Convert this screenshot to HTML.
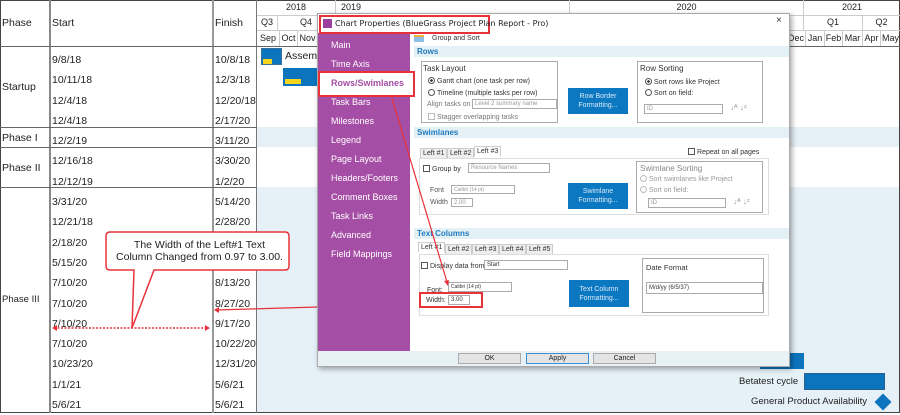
<!DOCTYPE html>
<html><head><meta charset="utf-8"><style>
*{margin:0;padding:0;box-sizing:border-box}
body{width:900px;height:413px;overflow:hidden;background:#fff;font-family:"Liberation Sans",sans-serif;position:relative;color:#222}
.a{position:absolute}
.t{position:absolute;font-size:10.5px;white-space:nowrap}
.vl{position:absolute;width:2px;background:#999}
.hl{position:absolute;height:1px;background:#666}
.g{position:absolute;font-size:9px;white-space:nowrap;border-left:1px solid #ccc;text-align:center;line-height:15px}
.d{font-family:"Liberation Sans",sans-serif;font-size:7px;color:#333;position:absolute;white-space:nowrap}
.nav{position:absolute;left:331px;font-family:"Liberation Sans",sans-serif;font-size:9px;color:#fff}
.sec{position:absolute;left:414px;width:375px;height:11px;background:#e3f0f5;font-family:"Liberation Sans",sans-serif;font-size:8px;font-weight:bold;color:#1f7ac0;padding-left:3px;line-height:11px}
.box{position:absolute;border:1px solid #aaa;background:#fff}
.btn{position:absolute;background:#0c78c2;color:#dbe9f5;font-family:"Liberation Sans",sans-serif;font-size:7px;text-align:center;line-height:9px}
.sel{position:absolute;border:1px solid #aaa;background:#fff;font-size:6px;color:#999;font-family:"Liberation Sans",sans-serif;padding-left:2px;line-height:9px}
.tab{position:absolute;font-family:"Liberation Sans",sans-serif;font-size:7px;border:1px solid #ccc;background:#eee;padding:1px 2px;color:#333}
.rad{display:inline-block;width:7px;height:7px;border:1px solid #555;border-radius:50%;vertical-align:-1px;margin-right:2px}
.chk{display:inline-block;width:7px;height:7px;border:1px solid #555;vertical-align:-1px;margin-right:2px}
</style></head><body>
<div class="a" style="left:257px;top:127px;width:643px;height:20px;background:#e5f0f7"></div>
<div class="a" style="left:257px;top:187px;width:643px;height:226px;background:#e5f0f7"></div>
<div class="a" style="left:0;top:0;width:900px;height:413px;border:1px solid #444"></div>
<div class="vl" style="left:49px;top:0;height:413px;background:#888"></div>
<div class="vl" style="left:212px;top:0;height:413px;background:#999"></div>
<div class="vl" style="left:256px;top:0;height:413px;background:#777;width:1px"></div>
<div class="hl" style="left:0;top:46px;width:900px"></div>
<div class="hl" style="left:0;top:127px;width:257px"></div>
<div class="hl" style="left:0;top:147px;width:257px"></div>
<div class="hl" style="left:0;top:187px;width:257px"></div>
<div class="t" style="left:2px;top:17px">Phase</div>
<div class="t" style="left:52px;top:17px">Start</div>
<div class="t" style="left:215px;top:17px">Finish</div>
<div class="hl" style="left:257px;top:15px;width:643px;background:#ccc"></div>
<div class="hl" style="left:257px;top:30px;width:643px;background:#ccc"></div>
<div class="g" style="left:257px;top:0;width:78px;border-left:none">2018</div>
<div class="g" style="left:335px;top:0;width:234px;text-align:left;padding-left:5px">2019</div>
<div class="g" style="left:569px;top:0;width:234px">2020</div>
<div class="g" style="left:803px;top:0;width:97px">2021</div>
<div class="g" style="left:257px;top:15px;width:20px;border-left:none">Q3</div>
<div class="g" style="left:277px;top:15px;width:40px;text-align:right;padding-right:5px">Q4</div>
<div class="g" style="left:803px;top:15px;width:59px">Q1</div>
<div class="g" style="left:862px;top:15px;width:38px">Q2</div>
<div class="g" style="left:257px;top:31px;width:22px;border-left:none">Sep</div>
<div class="g" style="left:279px;top:31px;width:18px">Oct</div>
<div class="g" style="left:297px;top:31px;width:20px">Nov</div>
<div class="g" style="left:786px;top:31px;width:19px">Dec</div>
<div class="g" style="left:805px;top:31px;width:19px">Jan</div>
<div class="g" style="left:824px;top:31px;width:18px">Feb</div>
<div class="g" style="left:842px;top:31px;width:20px">Mar</div>
<div class="g" style="left:862px;top:31px;width:18px">Apr</div>
<div class="g" style="left:880px;top:31px;width:20px">May</div>
<div class="t" style="left:2px;top:81px">Startup</div>
<div class="t" style="left:2px;top:132px">Phase I</div>
<div class="t" style="left:2px;top:162px">Phase II</div>
<div class="t" style="left:2px;top:294px;font-size:9.5px">Phase III</div>
<div class="a" style="left:52px;top:50px;line-height:20.3px;font-size:10.5px">9/8/18<br>10/11/18<br>12/4/18<br>12/4/18<br>12/2/19<br>12/16/18<br>12/12/19<br>3/31/20<br>12/21/18<br>2/18/20<br>5/15/20<br>7/10/20<br>7/10/20<br>7/10/20<br>7/10/20<br>10/23/20<br>1/1/21<br>5/6/21</div>
<div class="a" style="left:215px;top:50px;line-height:20.3px;font-size:10.5px">10/8/18<br>12/3/18<br>12/20/18<br>2/17/20<br>3/11/20<br>3/30/20<br>1/2/20<br>5/14/20<br>2/28/20<br><br><br>8/13/20<br>8/27/20<br>9/17/20<br>10/22/20<br>12/31/20<br>5/6/21<br>5/6/21</div>
<div class="a" style="left:261px;top:48px;width:21px;height:17px;background:#0b74bd;border:1px solid #3a6fa0"></div>
<div class="a" style="left:263px;top:59px;width:9px;height:5px;background:#f5d41e"></div>
<div class="t" style="left:285px;top:50px">Assemb</div>
<div class="a" style="left:283px;top:68px;width:35px;height:18px;background:#0b74bd"></div>
<div class="a" style="left:285px;top:79px;width:16px;height:5px;background:#f5d41e"></div>
<div class="a" style="left:760px;top:353px;width:44px;height:16px;background:#0b74bd"></div>
<div class="a" style="left:804px;top:373px;width:81px;height:17px;background:#0b74bd;border:1px solid #2a5f90"></div>
<div class="t" style="left:739px;top:376px;font-size:9.5px">Betatest cycle</div>
<div class="t" style="left:751px;top:396px;font-size:9.5px">General Product Availability</div>
<div class="a" style="left:877px;top:396px;width:12px;height:12px;background:#0b74bd;transform:rotate(45deg)"></div>
<svg class="a" style="left:0;top:0" width="900" height="413">
<path d="M110,232 h175 q4,0 4,4 v30 q0,4 -4,4 h-131 l-22,58 l2,-58 h-24 q-4,0 -4,-4 v-30 q0,-4 4,-4z" fill="#fff" stroke="#e8323a" stroke-width="1.5"/>
<line x1="54" y1="328" x2="208" y2="328" stroke="#e8323a" stroke-width="1.5" stroke-dasharray="2,1.5"/>
<path d="M52,328 l5,-3 v6z M210,328 l-5,-3 v6z" fill="#e8323a"/>
<line x1="216" y1="310" x2="420" y2="304" stroke="#e8323a" stroke-width="1.2"/>
<path d="M214,310 l5,-3 v6z" fill="#e8323a"/>
</svg>
<div class="t" style="left:110px;top:239px;width:179px;text-align:center;font-family:'Liberation Sans',sans-serif;font-size:10.5px;line-height:12px">The Width of the Left#1 Text<br>Column Changed from 0.97 to 3.00.</div>
<div class="a" style="left:317px;top:13px;width:473px;height:354px;background:#fff;border:1px solid #aaa;box-shadow:2px 2px 5px rgba(0,0,0,.35)"></div>
<div class="a" style="left:318px;top:33px;width:92px;height:318px;background:#a54ea5"></div>
<div class="a" style="left:318px;top:351px;width:471px;height:15px;background:#e8f1f6"></div>
<div class="a" style="left:319px;top:15px;width:171px;height:19px;border:2px solid #e8323a"></div>
<div class="a" style="left:323px;top:19px;width:9px;height:9px;background:#9b3fa0"></div>
<div class="d" style="left:335px;top:19px;font-size:8px;color:#222;font-family:'DejaVu Sans',sans-serif">Chart Properties (BlueGrass Project Plan Report - Pro)</div>
<div class="d" style="left:776px;top:15px;font-size:10px;color:#333">×</div>
<div class="nav" style="top:40px">Main</div>
<div class="nav" style="top:59px">Time Axis</div>
<div class="a" style="left:318px;top:71px;width:97px;height:26px;background:#fff;border:2px solid #e8323a"></div>
<div class="nav" style="top:78px;color:#a54ea5;font-weight:bold">Rows/Swimlanes</div>
<div class="nav" style="top:97px">Task Bars</div>
<div class="nav" style="top:116px">Milestones</div>
<div class="nav" style="top:135px">Legend</div>
<div class="nav" style="top:154px">Page Layout</div>
<div class="nav" style="top:173px">Headers/Footers</div>
<div class="nav" style="top:192px">Comment Boxes</div>
<div class="nav" style="top:211px">Task Links</div>
<div class="nav" style="top:230px">Advanced</div>
<div class="nav" style="top:249px">Field Mappings</div>
<div class="a" style="left:414px;top:35px;width:10px;height:7px;background:#8fbfe6;border-top:2px solid #f2b53a"></div>
<div class="d" style="left:432px;top:35px">Group and Sort</div>
<div class="sec" style="top:46px">Rows</div>
<div class="box" style="left:421px;top:61px;width:137px;height:62px"></div>
<div class="d" style="left:423px;top:64px;font-size:8px">Task Layout</div>
<div class="d" style="left:428px;top:77px"><span class="rad" style="background:radial-gradient(#333 35%,#fff 40%)"></span>Gantt chart (one task per row)</div>
<div class="d" style="left:428px;top:89px"><span class="rad"></span>Timeline (multiple tasks per row)</div>
<div class="d" style="left:427px;top:101px;color:#777">Align tasks on</div>
<div class="sel" style="left:472px;top:99px;width:85px;height:10px">Level 2 summary name</div>
<div class="d" style="left:428px;top:113px;color:#777"><span class="chk" style="border-color:#bbb"></span>Stagger overlapping tasks</div>
<div class="btn" style="left:568px;top:88px;width:60px;height:26px;padding-top:4px">Row Border<br>Formatting...</div>
<div class="box" style="left:637px;top:61px;width:126px;height:62px"></div>
<div class="d" style="left:640px;top:64px;font-size:8px">Row Sorting</div>
<div class="d" style="left:645px;top:78px"><span class="rad" style="background:radial-gradient(#333 35%,#fff 40%)"></span>Sort rows like Project</div>
<div class="d" style="left:645px;top:89px"><span class="rad"></span>Sort on field:</div>
<div class="sel" style="left:644px;top:104px;width:79px;height:10px">ID</div>
<div class="d" style="left:730px;top:103px;color:#999;font-size:8px">↓ᴬ ↓ᶻ</div>
<div class="sec" style="top:127px">Swimlanes</div>
<div class="tab" style="left:420px;top:148px">Left #1</div>
<div class="tab" style="left:447px;top:148px">Left #2</div>
<div class="tab" style="left:474px;top:146px;background:#fff;border-bottom-color:#fff">Left #3</div>
<div class="box" style="left:419px;top:158px;width:350px;height:57px;border-color:#ddd"></div>
<div class="d" style="left:688px;top:148px"><span class="chk"></span>Repeat on all pages</div>
<div class="d" style="left:423px;top:165px"><span class="chk"></span>Group by</div>
<div class="sel" style="left:468px;top:163px;width:82px;height:10px">Resource Names</div>
<div class="d" style="left:430px;top:187px;color:#555">Font</div>
<div class="sel" style="left:451px;top:185px;width:64px;height:9px;font-size:5px">Calibri (14 pt)</div>
<div class="d" style="left:430px;top:199px;color:#555">Width</div>
<div class="sel" style="left:451px;top:198px;width:22px;height:9px">2.00</div>
<div class="btn" style="left:568px;top:183px;width:60px;height:26px;padding-top:4px">Swimlane<br>Formatting...</div>
<div class="box" style="left:636px;top:161px;width:127px;height:52px"></div>
<div class="d" style="left:640px;top:164px;font-size:8px;color:#888">Swimlane Sorting</div>
<div class="d" style="left:640px;top:175px;color:#999"><span class="rad" style="border-color:#bbb"></span>Sort swimlanes like Project</div>
<div class="d" style="left:640px;top:186px;color:#999"><span class="rad" style="border-color:#bbb"></span>Sort on field:</div>
<div class="sel" style="left:648px;top:198px;width:78px;height:10px">ID</div>
<div class="d" style="left:733px;top:197px;color:#999;font-size:8px">↓ᴬ ↓ᶻ</div>
<div class="sec" style="top:228px">Text Columns</div>
<div class="tab" style="left:418px;top:242px;background:#fff;border-bottom-color:#fff">Left #1</div>
<div class="tab" style="left:445px;top:244px">Left #2</div>
<div class="tab" style="left:472px;top:244px">Left #3</div>
<div class="tab" style="left:499px;top:244px">Left #4</div>
<div class="tab" style="left:526px;top:244px">Left #5</div>
<div class="box" style="left:419px;top:254px;width:350px;height:62px;border-color:#ddd"></div>
<div class="d" style="left:421px;top:262px"><span class="chk"></span>Display data from</div>
<div class="sel" style="left:484px;top:260px;width:84px;height:10px;color:#333">Start</div>
<div class="d" style="left:427px;top:287px">Font:</div>
<div class="sel" style="left:448px;top:282px;width:64px;height:10px;font-size:5px;color:#333">Calibri (14 pt)</div>
<div class="a" style="left:419px;top:292px;width:64px;height:16px;border:2px solid #e8323a"></div>
<div class="d" style="left:426px;top:297px">Width:</div>
<div class="sel" style="left:448px;top:295px;width:22px;height:10px;color:#333">3.00</div>
<div class="btn" style="left:569px;top:280px;width:60px;height:27px;padding-top:5px">Text Column<br>Formatting...</div>
<div class="box" style="left:642px;top:258px;width:122px;height:55px"></div>
<div class="d" style="left:646px;top:263px;font-size:7.5px">Date Format</div>
<div class="sel" style="left:646px;top:282px;width:117px;height:12px;color:#333;line-height:11px">M/d/yy (6/5/37)</div>
<div class="box" style="left:458px;top:353px;width:63px;height:11px;background:#e4e4e4;font-size:7px;text-align:center;line-height:9px">OK</div>
<div class="box" style="left:526px;top:353px;width:63px;height:11px;background:#e4e4e4;border-color:#3c8fd0;font-size:7px;text-align:center;line-height:9px">Apply</div>
<div class="box" style="left:593px;top:353px;width:63px;height:11px;background:#e4e4e4;font-size:7px;text-align:center;line-height:9px">Cancel</div>
<svg class="a" style="left:0;top:0;pointer-events:none" width="900" height="413">
<line x1="391" y1="95" x2="447" y2="282" stroke="#e8323a" stroke-width="1.2"/>
<path d="M448,286 l-4,-5 l5,-1z" fill="#e8323a"/>
</svg>
</body></html>
